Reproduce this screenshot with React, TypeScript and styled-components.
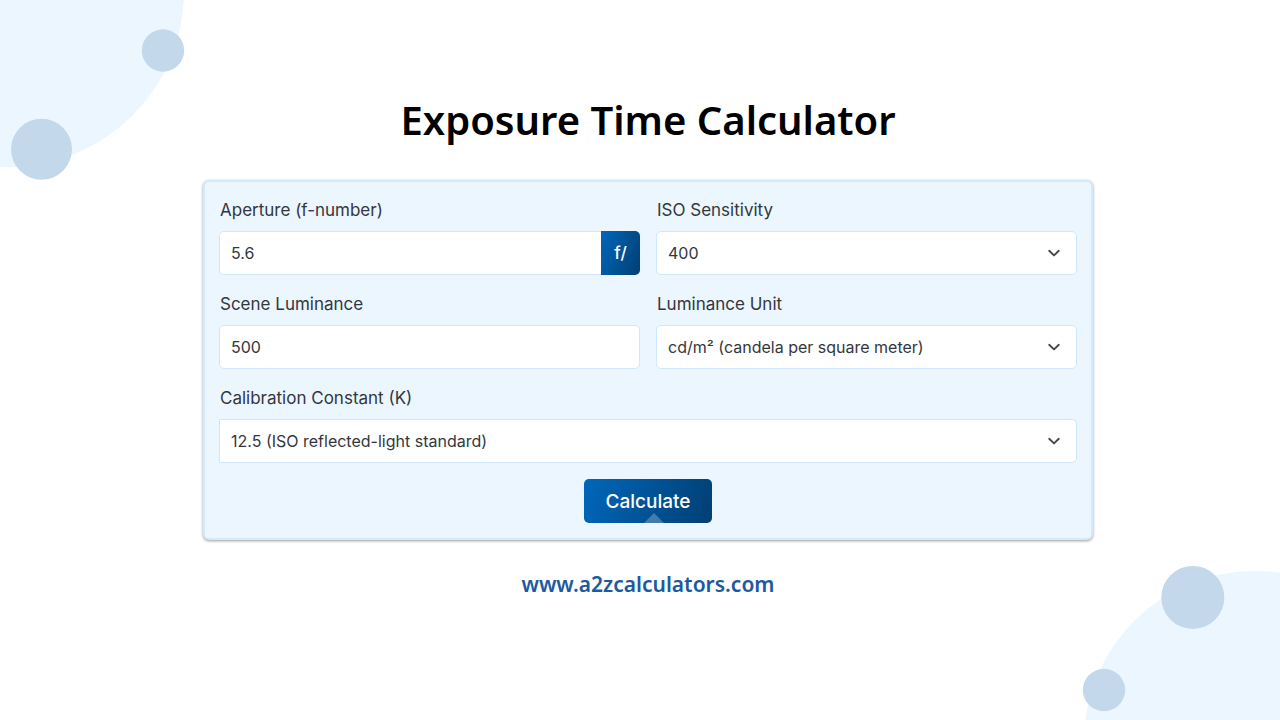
import React from 'react';
import styled, { createGlobalStyle, css } from 'styled-components';

const GlobalStyle = createGlobalStyle`
  *, *::before, *::after { box-sizing: border-box; }
  body { margin: 0; background: #ffffff; }
`;

const Page = styled.div`
  position: relative;
  display: flex;
  flex-direction: column;
  align-items: center;
  min-height: 100vh;
  padding: 92px 0 92px 16px;
  overflow: hidden;
  font-family: Inter, 'Liberation Sans', sans-serif;
  color: #33373d;
`;

const Corner = styled.svg<{ $place: 'top-left' | 'bottom-right' }>`
  position: absolute;
  pointer-events: none;
  ${({ $place }) => ($place === 'top-left' ? 'top: 0; left: 0;' : 'bottom: 0; right: 0;')}
`;

const Title = styled.h1`
  margin: 0 0 32px;
  font-family: 'Noto Sans', 'Open Sans', sans-serif;
  font-size: 40px;
  font-weight: 600;
  line-height: 56px;
  color: #000000;
  text-align: center;
`;

const Panel = styled.form`
  display: grid;
  grid-template-columns: repeat(2, minmax(0, 1fr));
  gap: 16px;
  width: 100%;
  max-width: 890px;
  padding: 15px 14px;
  border: 2px solid #d5e9fd;
  border-radius: 6px;
  background: #ebf6ff;
  box-shadow: 0 1px 3px rgba(0, 0, 0, 0.4);
`;

const Field = styled.div<{ $wide?: boolean }>`
  display: flex;
  flex-direction: column;
  gap: 8px;
  ${({ $wide }) => $wide && 'grid-column: 1 / -1;'}
`;

const Label = styled.label`
  padding-left: 1px;
  font-size: 17px;
  line-height: 26px;
`;

const control = css`
  width: 100%;
  height: 44px;
  margin: 0;
  padding: 0 11px;
  border: 1px solid #cfe8fd;
  border-radius: 5px;
  outline: none;
  background: #ffffff;
  color: #33373d;
  font-family: inherit;
  font-size: 16px;
`;

const TextBox = styled.input<{ $joined?: boolean }>`
  ${control}
  ${({ $joined }) => $joined && 'flex: 1; min-width: 0; border-right: 0; border-radius: 5px 0 0 5px;'}
`;

const InputGroup = styled.div`
  display: flex;
`;

const Unit = styled.span`
  display: flex;
  align-items: center;
  justify-content: center;
  width: 39px;
  border-radius: 0 5px 5px 0;
  background: linear-gradient(110deg, #0067bb, #003f73);
  color: #ffffff;
  font-size: 17px;
  font-weight: 500;
`;

const SelectBox = styled.div`
  position: relative;
`;

const Select = styled.select<{ $squareStart?: boolean }>`
  ${control}
  display: block;
  padding-right: 40px;
  appearance: none;
  ${({ $squareStart }) => $squareStart && 'border-radius: 0 5px 5px 0;'}
`;

const Chevron = styled.svg`
  position: absolute;
  top: 14px;
  right: 15px;
  pointer-events: none;
`;

const Actions = styled.div`
  display: flex;
  grid-column: 1 / -1;
  justify-content: center;
`;

const CalculateButton = styled.button`
  position: relative;
  height: 44px;
  padding: 0 22px;
  border: 0;
  border-radius: 5px;
  background: linear-gradient(110deg, #0067bb, #003f73);
  color: #ffffff;
  font-family: inherit;
  font-size: 19px;
  font-weight: 500;
`;

const Pointer = styled.svg`
  position: absolute;
  bottom: 0;
  left: 60px;
`;

const SiteLink = styled.a`
  margin-top: 28px;
  font-family: 'Noto Sans', 'Open Sans', sans-serif;
  font-size: 21px;
  font-weight: 600;
  line-height: 32px;
  color: #1c5aa0;
  text-decoration: none;
`;

type SelectFieldProps = {
  id: string;
  label: string;
  options: string[];
  wide?: boolean;
};

function SelectField({ id, label, options, wide }: SelectFieldProps) {
  return (
    <Field $wide={wide}>
      <Label htmlFor={id}>{label}</Label>
      <SelectBox>
        <Select id={id} $squareStart={wide}>
          {options.map((option) => (
            <option key={option}>{option}</option>
          ))}
        </Select>
        <Chevron width="16" height="16" viewBox="0 0 16 16" aria-hidden="true">
          <path
            d="M3.2 5.8 8 10.4l4.8-4.6"
            fill="none"
            stroke="#43484e"
            strokeWidth="1.9"
            strokeLinecap="round"
            strokeLinejoin="round"
          />
        </Chevron>
      </SelectBox>
    </Field>
  );
}

export default function App() {
  return (
    <>
      <GlobalStyle />
      <Page>
        <Corner $place="top-left" width="190" height="184" viewBox="0 0 190 184" aria-hidden="true">
          <circle cx="8" cy="-9" r="176" fill="#ebf6ff" />
          <circle cx="163" cy="50.5" r="21.2" fill="#c3d8eb" />
          <circle cx="41.5" cy="149.2" r="30.5" fill="#c3d8eb" />
        </Corner>
        <Corner $place="bottom-right" width="200" height="160" viewBox="1080 560 200 160" aria-hidden="true">
          <circle cx="1255" cy="742" r="171" fill="#ebf6ff" />
          <circle cx="1192.8" cy="597.4" r="31.5" fill="#c3d8eb" />
          <circle cx="1104" cy="690" r="21.2" fill="#c3d8eb" />
        </Corner>

        <Title>Exposure Time Calculator</Title>

        <Panel onSubmit={(event) => event.preventDefault()}>
          <Field>
            <Label htmlFor="aperture">Aperture (f-number)</Label>
            <InputGroup>
              <TextBox id="aperture" $joined inputMode="decimal" defaultValue="5.6" />
              <Unit>f/</Unit>
            </InputGroup>
          </Field>
          <SelectField id="iso" label="ISO Sensitivity" options={['400']} />
          <Field>
            <Label htmlFor="luminance">Scene Luminance</Label>
            <TextBox id="luminance" inputMode="decimal" defaultValue="500" />
          </Field>
          <SelectField id="unit" label="Luminance Unit" options={['cd/m² (candela per square meter)']} />
          <SelectField
            id="calibration"
            label="Calibration Constant (K)"
            options={['12.5 (ISO reflected-light standard)']}
            wide
          />
          <Actions>
            <CalculateButton type="submit">
              Calculate
              <Pointer width="20" height="10" viewBox="0 0 20 10" aria-hidden="true">
                <path d="M10 0 20 10H0Z" fill="#ffffff" fillOpacity="0.25" />
              </Pointer>
            </CalculateButton>
          </Actions>
        </Panel>

        <SiteLink href="https://www.a2zcalculators.com">www.a2zcalculators.com</SiteLink>
      </Page>
    </>
  );
}
